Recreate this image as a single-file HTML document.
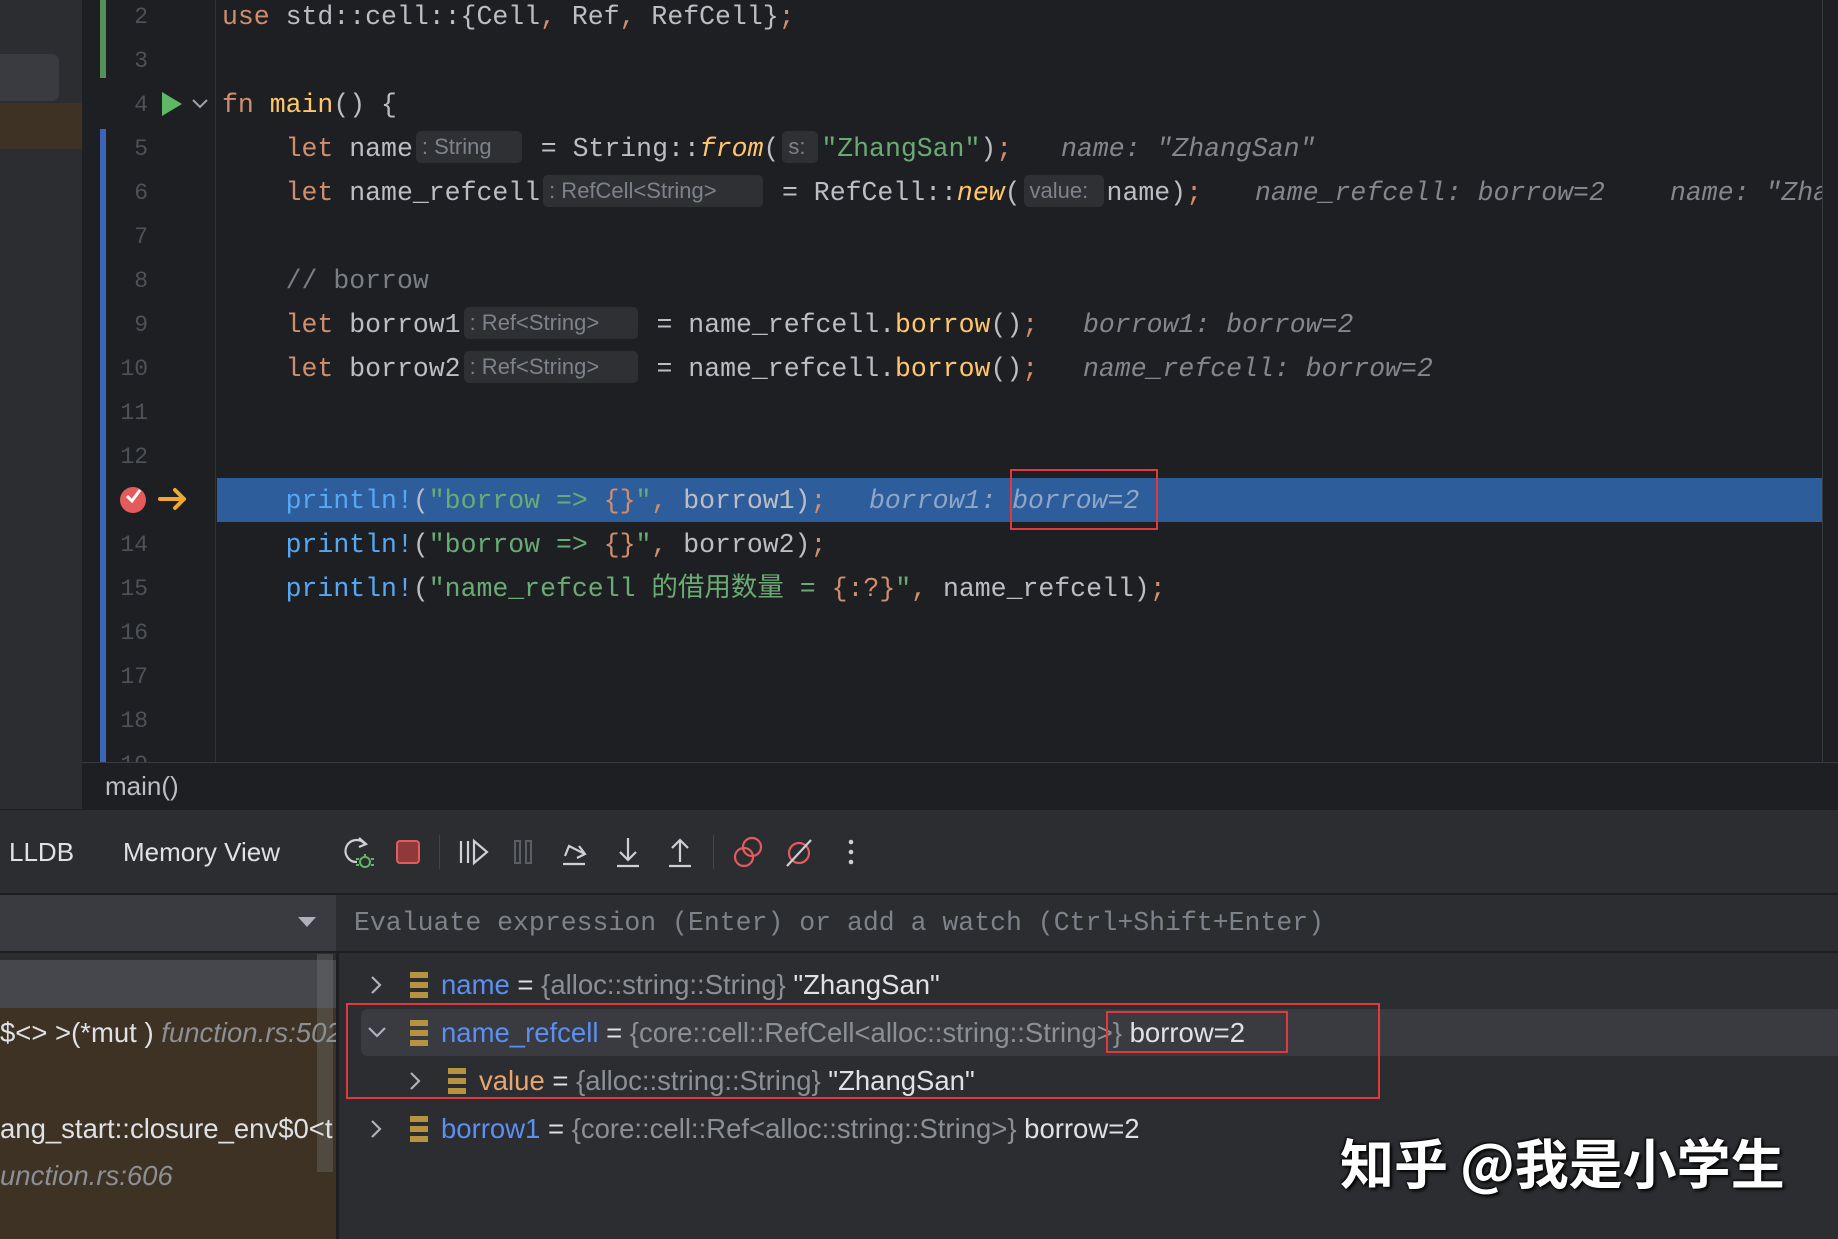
<!DOCTYPE html>
<html><head><meta charset="utf-8">
<style>
*{margin:0;padding:0;box-sizing:border-box}
body{width:1838px;height:1239px;overflow:hidden;background:#1e1f22;position:relative;font-family:"Liberation Sans","Noto Sans CJK SC",sans-serif}
.abs{position:absolute}
.ln{position:absolute;left:222px;height:44px;line-height:44px;font-family:"Liberation Mono","Noto Sans CJK SC",monospace;font-size:26.5px;color:#bcbec4;white-space:pre}
.num{position:absolute;left:100px;width:48px;text-align:right;height:44px;line-height:44px;font-family:"Liberation Mono",monospace;font-size:23px;color:#4e5157}
.k{color:#cf8e6d}.s{color:#6aab73}.m{color:#56a8f5}.f{color:#ffc66d}.fi{color:#ffc66d;font-style:italic}.c{color:#7a7e85}.o{color:#cf8e6d}
.h{display:inline-block;height:32px;line-height:32px;vertical-align:middle;background:#2f3034;color:#7e828a;font-family:"Liberation Sans",sans-serif;font-size:22px;border-radius:5px;text-align:left;padding-left:6px;margin:0 3px;position:relative;top:-2px}
.dv{position:absolute;height:44px;line-height:44px;font-family:"Liberation Mono",monospace;font-size:26.5px;color:#83868c;font-style:italic;white-space:pre}
.var{position:absolute;height:46px;line-height:46px;font-size:27.5px;color:#dfe1e5;white-space:pre}
.vn{color:#5c8ff2}.vt{color:#8c8f94}
.ic{position:absolute;width:18px;height:26px}
.ic i{display:block;height:6px;background:#b8933f;margin-bottom:4px}
</style></head><body>

<div class="abs" style="left:0;top:0;width:82px;height:809px;background:#2b2d30"></div>
<div class="abs" style="left:0;top:54px;width:59px;height:47px;background:#393b40;border-radius:0 7px 7px 0"></div>
<div class="abs" style="left:0;top:103px;width:82px;height:46px;background:#3d3223"></div>

<div class="abs" style="left:100px;top:0;width:6px;height:78px;background:#549159"></div>
<div class="abs" style="left:100px;top:129px;width:6px;height:633px;background:#3b66b8"></div>
<div class="abs" style="left:215px;top:0;width:1px;height:762px;background:#2f3136"></div>
<div class="abs" style="left:1822px;top:0;width:1px;height:762px;background:#393b40"></div>

<div class="abs" style="left:217px;top:478px;width:1605px;height:44px;background:#2d5d9b"></div>

<div class="num" style="top:-5.5px">2</div>
<div class="num" style="top:38.5px">3</div>
<div class="num" style="top:82.5px">4</div>
<div class="num" style="top:126.5px">5</div>
<div class="num" style="top:170.5px">6</div>
<div class="num" style="top:214.5px">7</div>
<div class="num" style="top:258.5px">8</div>
<div class="num" style="top:302.5px">9</div>
<div class="num" style="top:346.5px">10</div>
<div class="num" style="top:390.5px">11</div>
<div class="num" style="top:434.5px">12</div>
<div class="num" style="top:522.5px">14</div>
<div class="num" style="top:566.5px">15</div>
<div class="num" style="top:610.5px">16</div>
<div class="num" style="top:654.5px">17</div>
<div class="num" style="top:698.5px">18</div>
<div class="num" style="top:742.5px;height:20px;overflow:hidden">19</div>

<svg class="abs" style="left:158px;top:90px" width="56" height="28"><path d="M4 2 L24 14 L4 26Z" fill="#5fb865"/><path d="M35 10 L42 17 L49 10" stroke="#9da0a8" stroke-width="2" fill="none"/></svg>
<svg class="abs" style="left:118px;top:484px" width="72" height="30"><circle cx="15" cy="16" r="13" fill="#e55b5b"/><path d="M9 12 L14 17 L22 6" stroke="#fff" stroke-width="3" fill="none"/><path d="M42 15 H66 M57 6 L66 15 L57 24" stroke="#f2a72f" stroke-width="4" fill="none" stroke-linecap="round" stroke-linejoin="round"/></svg>

<div class="ln" style="top:-5.5px"><span class="k">use</span> std::cell::{Cell<span class="o">,</span> Ref<span class="o">,</span> RefCell}<span class="o">;</span></div>
<div class="ln" style="top:82.5px"><span class="k">fn</span> <span class="f">main</span>() {</div>
<div class="ln" style="top:126.5px">    <span class="k">let</span> name<span class="h" style="width:106px">: String</span> = String::<span class="fi">from</span>(<span class="h" style="width:36px">s:</span><span class="s">"ZhangSan"</span>)<span class="o">;</span></div>
<div class="ln" style="top:170.5px">    <span class="k">let</span> name_refcell<span class="h" style="width:220px">: RefCell&lt;String&gt;</span> = RefCell::<span class="fi">new</span>(<span class="h" style="width:80px">value:</span>name)<span class="o">;</span></div>
<div class="ln" style="top:258.5px">    <span class="c">// borrow</span></div>
<div class="ln" style="top:302.5px">    <span class="k">let</span> borrow1<span class="h" style="width:174px">: Ref&lt;String&gt;</span> = name_refcell.<span class="f">borrow</span>()<span class="o">;</span></div>
<div class="ln" style="top:346.5px">    <span class="k">let</span> borrow2<span class="h" style="width:174px">: Ref&lt;String&gt;</span> = name_refcell.<span class="f">borrow</span>()<span class="o">;</span></div>
<div class="ln" style="top:478.5px">    <span class="m">println!</span>(<span class="s">"borrow =&gt; </span><span class="o">{}</span><span class="s">"</span><span class="o">,</span> borrow1)<span class="o">;</span></div>
<div class="ln" style="top:522.5px">    <span class="m">println!</span>(<span class="s">"borrow =&gt; </span><span class="o">{}</span><span class="s">"</span><span class="o">,</span> borrow2)<span class="o">;</span></div>
<div class="ln" style="top:566.5px">    <span class="m">println!</span>(<span class="s">"name_refcell 的借用数量 = </span><span class="o">{:?}</span><span class="s">"</span><span class="o">,</span> name_refcell)<span class="o">;</span></div>

<div class="dv" style="left:1061px;top:126.5px">name: "ZhangSan"</div>
<div class="dv" style="left:1255px;top:170.5px">name_refcell: borrow=2</div>
<div class="dv" style="left:1670px;top:170.5px;width:152px;overflow:hidden">name: "ZhangSan"</div>
<div class="dv" style="left:1083px;top:302.5px">borrow1: borrow=2</div>
<div class="dv" style="left:1083px;top:346.5px">name_refcell: borrow=2</div>
<div class="dv" style="left:869px;top:478.5px;color:#8fa6c6">borrow1: borrow=2</div>
<div class="abs" style="left:1010px;top:469px;width:148px;height:61px;border:2px solid #e0393e"></div>

<div class="abs" style="left:82px;top:762px;width:1756px;height:47px;background:#1e1f22;border-top:1px solid #393b40"></div>
<div class="abs" style="left:105px;top:767px;font-size:26px;color:#bcbec4;line-height:38px">main()</div>

<div class="abs" style="left:0;top:809px;width:1838px;height:84px;background:#2b2d30;border-top:1px solid #1e1f22"></div>
<div class="abs" style="left:9px;top:834px;font-size:26px;color:#dfe1e5;line-height:36px">LLDB</div>
<div class="abs" style="left:123px;top:834px;font-size:26px;color:#dfe1e5;line-height:36px">Memory View</div>
<svg class="abs" style="left:335px;top:832px" width="540" height="40">
 <path d="M30 12 A11 11 0 1 0 22 30" stroke="#ced0d6" stroke-width="2.2" fill="none"/><path d="M24 6 L31 12 L24 15" stroke="#ced0d6" stroke-width="2.2" fill="none"/>
 <circle cx="30" cy="30" r="5" stroke="#5fb865" stroke-width="2" fill="none"/><path d="M24 27h-3M39 27h-3M24 33h-3M39 33h-3M30 22v3" stroke="#5fb865" stroke-width="2"/>
 <rect x="62" y="9" width="22" height="22" rx="3" fill="#8e3a3a" stroke="#e35b5b" stroke-width="2"/>
 <rect x="104" y="3" width="1" height="34" fill="#43454a"/>
 <path d="M126 9v22M133 9v22M139 9 L152 20 L139 31Z" stroke="#ced0d6" stroke-width="2.2" fill="none"/>
 <path d="M180 9v22h5V9zM191 9v22h5V9z" stroke="#5b5e65" stroke-width="2" fill="none"/>
 <path d="M230 24 L234 14 L250 22 M244 14 L250 22 L242 26 M228 32h22" stroke="#ced0d6" stroke-width="2.2" fill="none"/>
 <path d="M293 6v22 M285 20 L293 28 L301 20 M282 34h22" stroke="#ced0d6" stroke-width="2.2" fill="none"/>
 <path d="M345 30V8 M337 16 L345 8 L353 16 M334 34h22" stroke="#ced0d6" stroke-width="2.2" fill="none"/>
 <rect x="378" y="3" width="1" height="34" fill="#43454a"/>
 <circle cx="409" cy="25" r="9" stroke="#e35b5b" stroke-width="2.2" fill="none"/><circle cx="417" cy="15" r="9" stroke="#e35b5b" stroke-width="2.2" fill="none"/>
 <circle cx="464" cy="21" r="10" stroke="#e35b5b" stroke-width="2.2" fill="none"/><path d="M452 34 L476 8" stroke="#ced0d6" stroke-width="2.2"/>
 <circle cx="516" cy="10" r="2.3" fill="#ced0d6"/><circle cx="516" cy="20" r="2.3" fill="#ced0d6"/><circle cx="516" cy="30" r="2.3" fill="#ced0d6"/>
</svg>

<div class="abs" style="left:0;top:893px;width:1838px;height:60px;background:#2b2d30;border-top:2px solid #1e1f22;border-bottom:2px solid #1e1f22"></div>
<div class="abs" style="left:0;top:895px;width:336px;height:56px;background:#393b40"></div>
<svg class="abs" style="left:296px;top:915px" width="22" height="14"><path d="M2 2 H20 L11 12Z" fill="#aeb1b7"/></svg>
<div class="abs" style="left:354px;top:903px;font-family:'Liberation Mono',monospace;font-size:26.5px;color:#7e828a;line-height:40px;white-space:pre">Evaluate expression (Enter) or add a watch (Ctrl+Shift+Enter)</div>

<div class="abs" style="left:0;top:953px;width:336px;height:286px;background:#2b2d30"></div>
<div class="abs" style="left:0;top:960px;width:336px;height:48px;background:#45474c"></div>
<div class="abs" style="left:0;top:1008px;width:336px;height:231px;background:#3d3223"></div>
<div class="abs" style="left:317px;top:954px;width:16px;height:218px;background:rgba(120,120,120,0.35)"></div>
<div class="abs" style="left:336px;top:953px;width:3px;height:286px;background:#1e1f22"></div>
<div class="abs" style="left:0;top:1010px;width:336px;overflow:hidden;font-size:27.5px;color:#dfe1e5;line-height:46px;white-space:pre">$&lt;&gt; &gt;(*mut ) <i style="color:#8c8f94">function.rs:502</i></div>
<div class="abs" style="left:0;top:1106px;width:336px;overflow:hidden;font-size:27.5px;color:#dfe1e5;line-height:46px;white-space:pre">ang_start::closure_env$0&lt;t</div>
<div class="abs" style="left:0;top:1153px;width:316px;overflow:hidden;font-size:27.5px;color:#8c8f94;line-height:46px;white-space:pre;font-style:italic">unction.rs:606</div>

<div class="abs" style="left:339px;top:953px;width:1499px;height:286px;background:#2b2d30"></div>
<div class="abs" style="left:361px;top:1009px;width:1477px;height:47px;background:#393b40;border-radius:7px 0 0 7px"></div>

<svg class="abs" style="left:368px;top:974px" width="16" height="22"><path d="M4 3 L12 11 L4 19" stroke="#aeb1b7" stroke-width="2.2" fill="none"/></svg>
<div class="ic" style="left:410px;top:972px"><i></i><i></i><i></i></div>
<div class="var" style="left:441px;top:962px"><span class="vn">name</span> = <span class="vt">{alloc::string::String}</span> "ZhangSan"</div>

<svg class="abs" style="left:366px;top:1024px" width="22" height="16"><path d="M3 4 L11 12 L19 4" stroke="#aeb1b7" stroke-width="2.2" fill="none"/></svg>
<div class="ic" style="left:410px;top:1020px"><i></i><i></i><i></i></div>
<div class="var" style="left:441px;top:1010px"><span class="vn">name_refcell</span> = <span class="vt">{core::cell::RefCell&lt;alloc::string::String&gt;}</span> borrow=2</div>

<svg class="abs" style="left:407px;top:1070px" width="16" height="22"><path d="M4 3 L12 11 L4 19" stroke="#aeb1b7" stroke-width="2.2" fill="none"/></svg>
<div class="ic" style="left:448px;top:1068px"><i></i><i></i><i></i></div>
<div class="var" style="left:479px;top:1058px"><span style="color:#e8a56f">value</span> = <span class="vt">{alloc::string::String}</span> "ZhangSan"</div>

<svg class="abs" style="left:368px;top:1118px" width="16" height="22"><path d="M4 3 L12 11 L4 19" stroke="#aeb1b7" stroke-width="2.2" fill="none"/></svg>
<div class="ic" style="left:410px;top:1116px"><i></i><i></i><i></i></div>
<div class="var" style="left:441px;top:1106px"><span class="vn">borrow1</span> = <span class="vt">{core::cell::Ref&lt;alloc::string::String&gt;}</span> borrow=2</div>

<div class="abs" style="left:346px;top:1003px;width:1034px;height:96px;border:2px solid #e0393e"></div>
<div class="abs" style="left:1106px;top:1011px;width:182px;height:42px;border:2px solid #e0393e"></div>

<div class="abs" style="left:1340px;top:1126px;font-size:54px;font-weight:bold;color:#fff;line-height:70px;white-space:pre;font-family:'Noto Sans CJK SC','Liberation Sans',sans-serif;text-shadow:2px 2px 3px #000,-1px -1px 2px #000">知乎 @我是小学生</div>

</body></html>
